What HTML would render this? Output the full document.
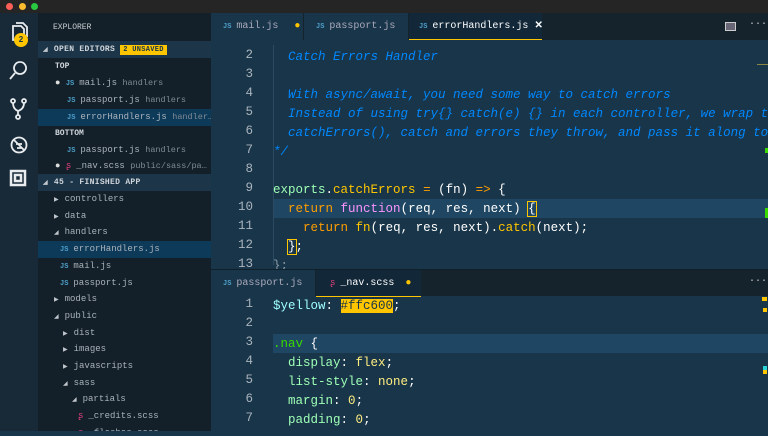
<!DOCTYPE html>
<html><head><meta charset="utf-8"><style>
*{margin:0;padding:0;box-sizing:border-box}
body{width:768px;height:431px;overflow:hidden;background:#193549;font-family:"Liberation Mono",monospace;position:relative}
.abs{position:absolute}
#title{left:0;top:0;width:768px;height:13px;background:#252526}
.dot{top:3px;width:7px;height:7px;border-radius:50%}
#act{left:0;top:13px;width:38px;height:418px;background:#182a38}
#side{left:38px;top:13px;width:173px;height:418px;background:#132029;font-size:9px;color:#aab3bb;white-space:nowrap;overflow:hidden}
.row{position:absolute;left:0;width:173px;height:17px;line-height:17px}
.hdr{background:#1d3548;color:#d0d6dc;font-weight:bold;font-size:8px;letter-spacing:.3px}
.sel{background:#0e3a5a}
.js{color:#4d9fc9;font-size:7px;font-weight:bold;margin-right:5px}
.dim{color:#7f8a93;font-size:8.5px}
.sc{color:#e0407c;font-size:9px;margin-right:5px}
.tri{color:#c0c6cc;font-size:6px;margin-right:6px}
.code{font-size:12.5px;white-space:pre;color:#fff}
.ln{position:absolute;left:211px;width:42px;text-align:right;color:#aab4bd;font-size:12.5px}
.cl{position:absolute;left:273px;height:19px;line-height:19px}
.cm{color:#0088ff;font-style:italic}
.tab{position:absolute;height:27px;line-height:27px;font-size:10px;color:#aab;white-space:nowrap;overflow:hidden}
</style></head><body>
<div id="title" class="abs"></div>
<div class="abs dot" style="left:6px;background:#fe5f57"></div>
<div class="abs dot" style="left:19px;background:#febc2e"></div>
<div class="abs dot" style="left:31px;background:#28c840"></div>

<div id="act" class="abs">
<svg width="38" height="418" viewBox="0 0 38 418" fill="none" stroke="#e8ecef" stroke-width="1.8">
<path d="M13 13h8l3 3v11h-11z M16 10h7l4 4v10"/>
<path d="M20 49a6 6 0 1 0 .1 0 M15 60l-5 6"/>
<circle cx="13" cy="88" r="2"/><circle cx="24" cy="88" r="2"/><circle cx="18" cy="104" r="2"/><path d="M13 90q0 6 5 8 M24 90q0 6-6 8v4"/>
<circle cx="19" cy="132" r="7.5"/><path d="M14 127l10 10 M16 131h6 M17 135h5"/>
<path d="M11 158h14v14h-14z M15 162h6v6h-6z" stroke-width="2.5"/>
</svg>
<div class="abs" style="left:14px;top:20px;width:14px;height:14px;border-radius:50%;background:#ffc600;color:#193549;font:bold 8px 'Liberation Sans',sans-serif;text-align:center;line-height:14px">2</div>
</div>

<div id="side" class="abs">
<div class="row" style="top:6px;left:15px;font-size:8px;color:#c7ccd1">EXPLORER</div>
<div class="row hdr" style="top:28px"><span class="tri" style="margin-left:5px">◢</span>OPEN EDITORS <span style="background:#ffc600;color:#193549;padding:1px 3px;font-size:7px">2 UNSAVED</span></div>
<div class="row" style="top:45px;left:17px;font-weight:bold;font-size:8px;color:#d0d6dc">TOP</div>
<div class="row" style="top:62px;left:17px"><span style="color:#ddd">●</span> <span class="js">JS</span>mail.js <span class="dim">handlers</span></div>
<div class="row" style="top:79px;left:29px"><span class="js">JS</span>passport.js <span class="dim">handlers</span></div>
<div class="row sel" style="top:96px"><span style="margin-left:29px" class="js">JS</span>errorHandlers.js <span class="dim">handler…</span></div>
<div class="row" style="top:112px;left:17px;font-weight:bold;font-size:8px;color:#d0d6dc">BOTTOM</div>
<div class="row" style="top:129px;left:29px"><span class="js">JS</span>passport.js <span class="dim">handlers</span></div>
<div class="row" style="top:145px;left:17px"><span style="color:#ddd">●</span> <span class="sc">ʂ</span>_nav.scss <span class="dim">public/sass/pa…</span></div>
<div class="row hdr" style="top:161px"><span class="tri" style="margin-left:5px">◢</span>45 - FINISHED APP</div>
<div class="row" style="top:178px;left:16px"><span class="tri">▶</span>controllers</div>
<div class="row" style="top:195px;left:16px"><span class="tri">▶</span>data</div>
<div class="row" style="top:211px;left:16px"><span class="tri">◢</span>handlers</div>
<div class="row sel" style="top:228px"><span class="js" style="margin-left:22px">JS</span>errorHandlers.js</div>
<div class="row" style="top:245px;left:22px"><span class="js">JS</span>mail.js</div>
<div class="row" style="top:262px;left:22px"><span class="js">JS</span>passport.js</div>
<div class="row" style="top:278px;left:16px"><span class="tri">▶</span>models</div>
<div class="row" style="top:295px;left:16px"><span class="tri">◢</span>public</div>
<div class="row" style="top:312px;left:25px"><span class="tri">▶</span>dist</div>
<div class="row" style="top:328px;left:25px"><span class="tri">▶</span>images</div>
<div class="row" style="top:345px;left:25px"><span class="tri">▶</span>javascripts</div>
<div class="row" style="top:362px;left:25px"><span class="tri">◢</span>sass</div>
<div class="row" style="top:378px;left:34px"><span class="tri">◢</span>partials</div>
<div class="row" style="top:395px;left:40px"><span class="sc">ʂ</span>_credits.scss</div>
<div class="row" style="top:412px;left:40px"><span class="sc">ʂ</span>_flashes.scss</div>
</div>

<!-- top tabs -->
<div class="abs" style="left:211px;top:13px;width:557px;height:27px;background:#15232d"></div>
<div class="tab" style="left:211px;top:13px;width:92px;background:#193549;padding-left:12px"><span class="js">JS</span>mail.js <span style="color:#ffc600;margin-left:10px">●</span></div>
<div class="tab" style="left:304px;top:13px;width:104px;background:#193549;padding-left:12px"><span class="js">JS</span>passport.js</div>
<div class="tab" style="left:409px;top:13px;width:133px;background:#122738;padding-left:10px;color:#fff;border-bottom:1px solid #ffc600"><span class="js">JS</span>errorHandlers.js <b>✕</b></div>
<div class="abs" style="left:725px;top:22px;width:11px;height:9px;border:1.5px solid #ccc;background:#667"></div>
<div class="abs" style="left:749px;top:19px;color:#ccc;font-size:10px">···</div>

<!-- top editor -->
<div class="abs" style="left:211px;top:40px;width:557px;height:230px;overflow:hidden">
<div class="abs" style="left:62px;top:159px;width:495px;height:19px;background:#1f4662"></div>
<div class="abs" style="left:62px;top:5px;width:1px;height:220px;background:#2c4b62"></div>
</div>
<div class="code">
<div class="ln" style="top:29px">1</div><div class="ln" style="top:48px">2</div><div class="ln" style="top:67px">3</div><div class="ln" style="top:86px">4</div><div class="ln" style="top:105px">5</div><div class="ln" style="top:124px">6</div><div class="ln" style="top:143px">7</div><div class="ln" style="top:162px">8</div><div class="ln" style="top:181px">9</div><div class="ln" style="top:200px">10</div><div class="ln" style="top:219px">11</div><div class="ln" style="top:238px">12</div><div class="ln" style="top:257px">13</div>
<div class="cl cm" style="top:48px">  Catch Errors Handler</div>
<div class="cl cm" style="top:86px">  With async/await, you need some way to catch errors</div>
<div class="cl cm" style="top:105px">  Instead of using try{} catch(e) {} in each controller, we wrap the</div>
<div class="cl cm" style="top:124px">  catchErrors(), catch and errors they throw, and pass it along to</div>
<div class="cl cm" style="top:143px">*/</div>
<div class="cl" style="top:181px"><span style="color:#9effb6">exports</span>.<span style="color:#ffc600">catchErrors</span> <span style="color:#ff9d00">=</span> (fn) <span style="color:#ff9d00">=&gt;</span> {</div>
<div class="cl" style="top:200px">  <span style="color:#ff9d00">return</span> <span style="color:#fb94ff">function</span>(req, res, next) <span style="outline:1px solid #ffc600">{</span></div>
<div class="cl" style="top:219px">    <span style="color:#ff9d00">return</span> <span style="color:#ffc600">fn</span>(req, res, next).<span style="color:#ffc600">catch</span>(next);</div>
<div class="cl" style="top:238px">  <span style="outline:1px solid #ffc600">}</span>;</div>
<div class="cl" style="top:257px;color:#8899a6">};</div>
</div>
<div class="abs" style="left:211px;top:13px;width:557px;height:27px;background:#15232d;z-index:-0"></div>
<div class="tab" style="left:211px;top:13px;width:92px;background:#193549;padding-left:12px"><span class="js">JS</span>mail.js <span style="color:#ffc600;margin-left:10px">●</span></div>
<div class="tab" style="left:304px;top:13px;width:104px;background:#193549;padding-left:12px"><span class="js">JS</span>passport.js</div>
<div class="tab" style="left:409px;top:13px;width:133px;background:#122738;padding-left:10px;color:#fff;border-bottom:1px solid #ffc600"><span class="js">JS</span>errorHandlers.js <b>✕</b></div>
<div class="abs" style="left:725px;top:22px;width:11px;height:9px;border:1.5px solid #ccc;background:#667"></div>
<div class="abs" style="left:749px;top:19px;color:#ccc;font-size:10px">···</div>
<div class="abs" style="left:757px;top:64px;width:11px;height:1px;background:#888844"></div>
<div class="abs" style="left:765px;top:148px;width:3px;height:5px;background:#3ad900"></div>
<div class="abs" style="left:765px;top:208px;width:3px;height:10px;background:#3ad900"></div>

<!-- bottom tabs -->
<div class="abs" style="left:211px;top:269px;width:557px;height:27px;background:#15232d;border-top:1px solid #10202b"></div>
<div class="tab" style="left:211px;top:270px;width:104px;background:#193549;padding-left:12px"><span class="js">JS</span>passport.js</div>
<div class="tab" style="left:316px;top:270px;width:105px;background:#122738;padding-left:14px;color:#fff;border-bottom:1px solid #ffc600"><span class="sc">ʂ</span>_nav.scss <span style="color:#ffc600;margin-left:5px">●</span></div>
<div class="abs" style="left:749px;top:276px;color:#ccc;font-size:10px">···</div>

<!-- bottom editor -->
<div class="abs" style="left:273px;top:334px;width:495px;height:19px;background:#1f4662"></div>
<div class="code">
<div class="ln" style="top:297px">1</div><div class="ln" style="top:316px">2</div><div class="ln" style="top:335px">3</div><div class="ln" style="top:354px">4</div><div class="ln" style="top:373px">5</div><div class="ln" style="top:392px">6</div><div class="ln" style="top:411px">7</div>
<div class="cl" style="top:297px"><span style="color:#9effff">$yellow</span>: <span style="background:#ffc600;color:#193549">#ffc600</span>;</div>
<div class="cl" style="top:335px"><span style="color:#3ad900">.nav</span> {</div>
<div class="cl" style="top:354px">  <span style="color:#9effb6">display</span>: <span style="color:#ffee80">flex</span>;</div>
<div class="cl" style="top:373px">  <span style="color:#9effb6">list-style</span>: <span style="color:#ffee80">none</span>;</div>
<div class="cl" style="top:392px">  <span style="color:#9effb6">margin</span>: <span style="color:#ffee80">0</span>;</div>
<div class="cl" style="top:411px">  <span style="color:#9effb6">padding</span>: <span style="color:#ffee80">0</span>;</div>
</div>
<div class="abs" style="left:762px;top:297px;width:5px;height:4px;background:#ffc600"></div>
<div class="abs" style="left:763px;top:308px;width:4px;height:4px;background:#ffc600"></div>
<div class="abs" style="left:763px;top:366px;width:4px;height:4px;background:#2ad4d4"></div>
<div class="abs" style="left:763px;top:370px;width:4px;height:4px;background:#ffc600"></div>
</body></html>
